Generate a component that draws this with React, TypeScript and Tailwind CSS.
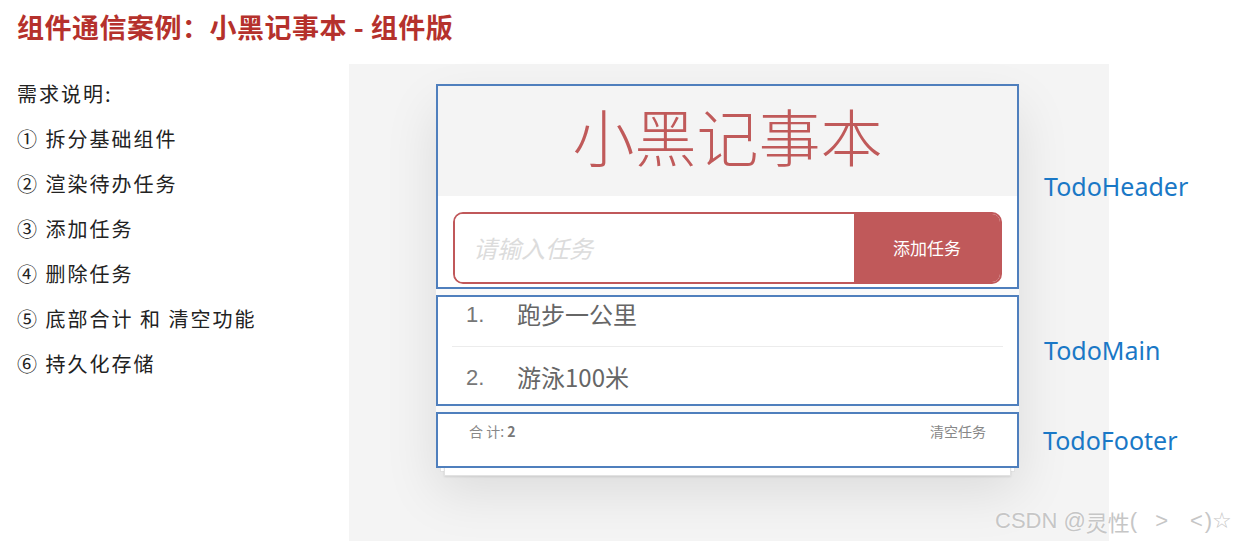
const cjk = "font-['Noto_Sans_CJK_SC','Noto_Sans',sans-serif]";

const needs = [
  "① 拆分基础组件",
  "② 渲染待办任务",
  "③ 添加任务",
  "④ 删除任务",
  "⑤ 底部合计 和 清空功能",
  "⑥ 持久化存储",
];

const todos = [
  { id: 1, name: "跑步一公里" },
  { id: 2, name: "游泳100米" },
];

function TodoHeader() {
  return (
    <div className="h-[205px] border-2 border-[#4f7fbd] bg-white flex flex-col">
      <div className="h-[110px] bg-[#f4f4f4] flex justify-center pt-[14px]">
        <h1 className={`${cjk} text-[62px] font-light leading-[70px] text-[#c05a5a]`}>
          小黑记事本
        </h1>
      </div>
      <div className="px-[15px] pt-[16px]">
        <div className="flex h-[72px] rounded-[10px] border-2 border-[#c0585a] overflow-hidden">
          <input
            className={`${cjk} flex-1 bg-white pl-[18px] text-[24px] italic outline-none placeholder:text-[#dcdcdc]`}
            placeholder="请输入任务"
          />
          <button className={`${cjk} w-[146px] bg-[#c0595a] text-[17px] text-white`}>
            添加任务
          </button>
        </div>
      </div>
    </div>
  );
}

function TodoMain() {
  return (
    <div className="h-[111px] border-2 border-[#4f7fbd] bg-white overflow-hidden">
      {todos.map((t, i) => (
        <div
          key={t.id}
          className={
            i === 0
              ? "mx-[14px] h-[50px] border-b border-[#ececec] flex items-start"
              : "mx-[14px] h-[57px] flex items-start"
          }
        >
          <span className={`${cjk} flex items-center text-[24px] text-[#666] ${i === 0 ? "h-[34px]" : "h-[60px]"}`}>
            <span className="w-[65px] pl-[14px] font-['Liberation_Sans',sans-serif] text-[22px] text-[#777]">{i + 1}.</span>
            <span>{t.name}</span>
          </span>
        </div>
      ))}
    </div>
  );
}

function TodoFooter() {
  return (
    <div className="relative">
      <div className="absolute left-[4px] right-[4px] top-[4px] h-[56px] border border-[#e2e2e2] bg-white" />
      <div className="absolute left-[8px] right-[8px] top-[8px] h-[56px] border border-[#e2e2e2] bg-white shadow-[0_1px_2px_rgba(0,0,0,0.1)]" />
      <div className={`${cjk} relative h-[56px] border-2 border-[#4f7fbd] bg-white flex items-start justify-between px-[31px] pt-[7px] text-[14px] leading-[20px] text-[#888]`}>
        <span>
          合 计: <strong className="font-semibold text-[#777]">2</strong>
        </span>
        <span className="cursor-pointer">清空任务</span>
      </div>
    </div>
  );
}

export default function App() {
  return (
    <div className="relative w-[1237px] h-[541px] overflow-hidden bg-white">
      <div className="h-[54px] flex items-center pl-[17px]">
        <h2 className={`${cjk} text-[27px] font-bold tracking-[0.5px] text-[#b5312c]`}>
          组件通信案例：小黑记事本 - 组件版
        </h2>
      </div>

      <div className="mt-[10px] flex">
        {/* 왼쪽 설명 */}
        <div className={`${cjk} w-[349px] shrink-0 pl-[17px] pt-[7px] text-[20px] tracking-[2px] text-[#222]`}>
          <p className="h-[45px] leading-[45px]">需求说明:</p>
          {needs.map((n) => (
            <p key={n} className="h-[45px] leading-[45px] whitespace-pre">
              {n}
            </p>
          ))}
        </div>

        {/* 스크린샷 영역 */}
        <div className="w-[760px] h-[477px] shrink-0 flex bg-[#f4f4f4] pt-[20px] pl-[87px]">
          <div className="w-[583px] h-fit shrink-0 flex flex-col gap-[6px] bg-[#fafafa] shadow-[0_24px_50px_rgba(0,0,0,0.1)]">
            <TodoHeader />
            <TodoMain />
            <TodoFooter />
          </div>

          {/* 라벨 */}
          <div className="shrink-0 pl-[25px] pt-[87px] flex flex-col font-['Noto_Sans',sans-serif] text-[25px] leading-[30px] text-[#1a78c6]">
            <span>TodoHeader</span>
            <span className="mt-[134px]">TodoMain</span>
            <span className="mt-[60px] -ml-px">TodoFooter</span>
          </div>
        </div>
      </div>

      <div
        className="absolute left-[995px] bottom-[6px] flex items-center whitespace-pre font-['Liberation_Sans',sans-serif] text-[22px] leading-[28px] text-[#c6c6c6] [text-shadow:0_0_2px_#fff]"
      >
        <span>CSDN @</span>
        <span className={cjk}>灵性</span>
        <span>(</span>
        <span className="ml-[18px]">&gt;</span>
        <span className="ml-[22px]">&lt;</span>
        <span className="ml-[2px]">)☆</span>
      </div>
    </div>
  );
}
